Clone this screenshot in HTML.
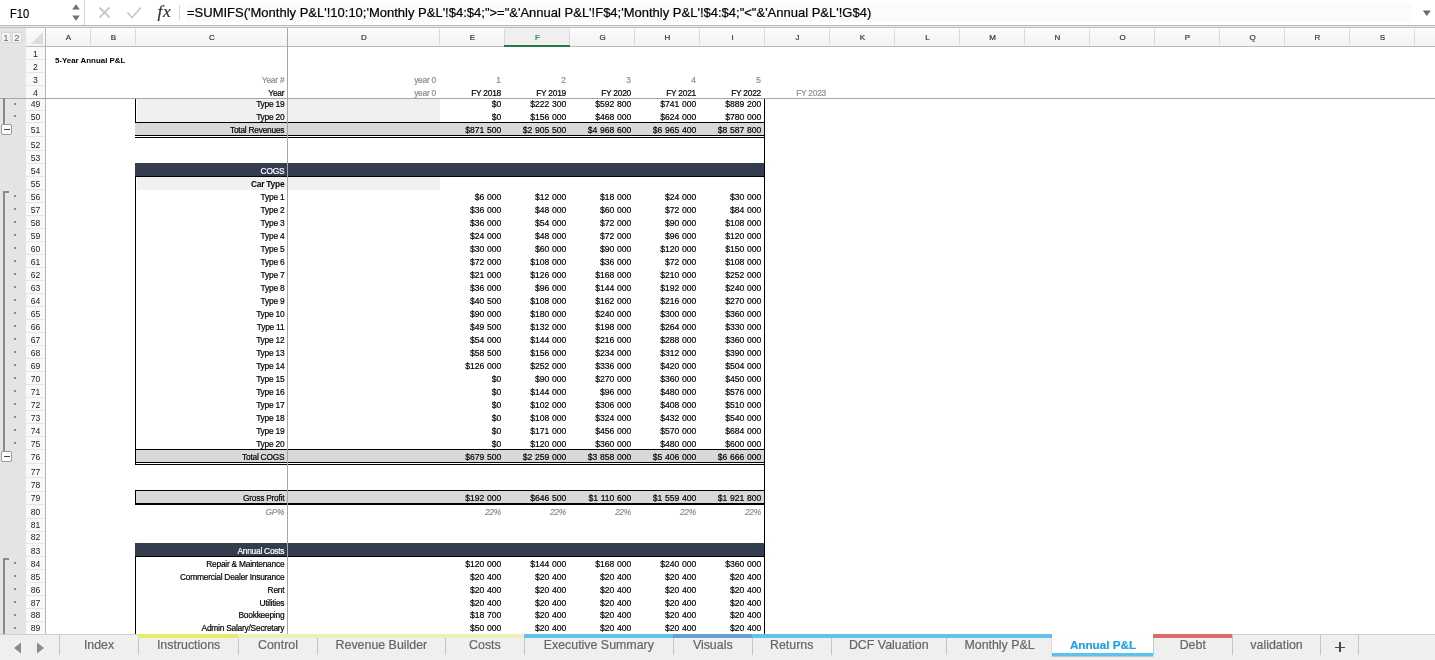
<!DOCTYPE html><html><head><meta charset="utf-8"><style>
html,body{margin:0;padding:0;}
body{width:1435px;height:660px;overflow:hidden;position:relative;background:#fff;font-family:"Liberation Sans",sans-serif;color:#000;}
div{position:absolute;}
.t{white-space:nowrap;}
#wrap{left:0;top:0;width:1435px;height:660px;will-change:transform;}
.n{word-spacing:0.3px;}
.t{-webkit-text-stroke:0.2px currentColor;}
.g{color:#8c8c8c;}
.L{letter-spacing:-0.24px;}
.hd{color:#222;font-weight:bold;}
</style></head><body><div id="wrap">
<div style="left:0px;top:0px;width:1435px;height:25px;background:#ffffff;"></div>
<div style="left:186px;top:3px;width:1226px;height:19px;background:#fbfbfb;"></div>
<div class="t " style="left:9.5px;top:7.00px;font-size:13px;line-height:13px;color:#000;transform:scaleX(0.86);transform-origin:0 0;">F10</div>
<svg style="position:absolute;left:71px;top:3px" width="10" height="20" viewBox="0 0 10 20"><path d="M1.2 6.5 L5 1.2 L8.8 6.5Z" fill="#707070"/><path d="M1.2 12.5 L5 17.8 L8.8 12.5Z" fill="#707070"/></svg>
<div style="left:84px;top:0px;width:1px;height:25px;background:#d4d4d4;"></div>
<svg style="position:absolute;left:97px;top:5px" width="16" height="16" viewBox="0 0 16 16"><path d="M2.5 2.5 L12.5 12.5 M12.5 2.5 L2.5 12.5" stroke="#c8c8c8" stroke-width="1.8" fill="none"/></svg>
<svg style="position:absolute;left:126px;top:5px" width="18" height="16" viewBox="0 0 18 16"><path d="M1.5 7.5 L6 12.5 L15 2.5" stroke="#c8c8c8" stroke-width="1.8" fill="none"/></svg>
<div class="t " style="left:157.5px;top:2.69px;font-size:17.5px;line-height:17.5px;color:#333;font-family:'Liberation Serif',serif;font-style:italic;letter-spacing:0.6px;">fx</div>
<div style="left:179px;top:5px;width:1px;height:15px;background:#d8d8d8;"></div>
<div class="t " style="left:187px;top:6.00px;font-size:13px;line-height:13px;color:#000;">=SUMIFS('Monthly P&amp;L'!10:10;'Monthly P&amp;L'!$4:$4;"&gt;="&amp;'Annual P&amp;L'!F$4;'Monthly P&amp;L'!$4:$4;"&lt;"&amp;'Annual P&amp;L'!G$4)</div>
<svg style="position:absolute;left:1421px;top:7px" width="12" height="10" viewBox="0 0 12 10"><path d="M1.8 3.5 L9.8 3.5 L5.8 9Z" fill="#6a6a6a"/></svg>
<div style="left:0px;top:25px;width:1435px;height:1px;background:#b9b9b9;"></div>
<div style="left:0px;top:26px;width:1435px;height:1px;background:#ececec;"></div>
<div style="left:0px;top:27px;width:1435px;height:1px;background:#bdbdbd;"></div>
<div style="left:0px;top:28px;width:26px;height:606px;background:#e4e4e4;"></div>
<div style="left:1px;top:32px;width:10px;height:11px;background:#f3f3f3;border:1px solid #d9d9d9;box-sizing:border-box;"></div>
<div class="t " style="left:1.0px;width:10px;text-align:center;top:33.46px;font-size:9.5px;line-height:9.5px;color:#666;-webkit-text-stroke:0;">1</div>
<div style="left:12px;top:32px;width:10px;height:11px;background:#f3f3f3;border:1px solid #d9d9d9;box-sizing:border-box;"></div>
<div class="t " style="left:12.0px;width:10px;text-align:center;top:33.46px;font-size:9.5px;line-height:9.5px;color:#666;-webkit-text-stroke:0;">2</div>
<div style="left:26px;top:28px;width:1409px;height:18px;background:linear-gradient(#fcfcfc,#f3f3f3);"></div>
<svg style="position:absolute;left:30px;top:31px" width="14" height="14" viewBox="0 0 14 14"><path d="M1 13 L13 1 L13 13Z" fill="#dcdcdc"/></svg>
<div style="left:505px;top:28px;width:65px;height:17px;background:#efefef;"></div>
<div style="left:90px;top:29px;width:1px;height:16px;background:#dadada;"></div>
<div style="left:135px;top:29px;width:1px;height:16px;background:#dadada;"></div>
<div style="left:439px;top:29px;width:1px;height:16px;background:#dadada;"></div>
<div style="left:504px;top:29px;width:1px;height:16px;background:#dadada;"></div>
<div style="left:569px;top:29px;width:1px;height:16px;background:#dadada;"></div>
<div style="left:634px;top:29px;width:1px;height:16px;background:#dadada;"></div>
<div style="left:699px;top:29px;width:1px;height:16px;background:#dadada;"></div>
<div style="left:764px;top:29px;width:1px;height:16px;background:#dadada;"></div>
<div style="left:829px;top:29px;width:1px;height:16px;background:#dadada;"></div>
<div style="left:894px;top:29px;width:1px;height:16px;background:#dadada;"></div>
<div style="left:959px;top:29px;width:1px;height:16px;background:#dadada;"></div>
<div style="left:1024px;top:29px;width:1px;height:16px;background:#dadada;"></div>
<div style="left:1089px;top:29px;width:1px;height:16px;background:#dadada;"></div>
<div style="left:1154px;top:29px;width:1px;height:16px;background:#dadada;"></div>
<div style="left:1219px;top:29px;width:1px;height:16px;background:#dadada;"></div>
<div style="left:1284px;top:29px;width:1px;height:16px;background:#dadada;"></div>
<div style="left:1349px;top:29px;width:1px;height:16px;background:#dadada;"></div>
<div style="left:1414px;top:29px;width:1px;height:16px;background:#dadada;"></div>
<div style="left:26px;top:46px;width:1409px;height:1px;background:#bcbcbc;"></div>
<div style="left:504px;top:45px;width:66px;height:2px;background:#1f7a44;"></div>
<div class="t " style="left:48.5px;width:40px;text-align:center;top:34.00px;font-size:8px;line-height:8px;color:#333;-webkit-text-stroke:0.2px currentColor;">A</div>
<div class="t " style="left:93.5px;width:40px;text-align:center;top:34.00px;font-size:8px;line-height:8px;color:#333;-webkit-text-stroke:0.2px currentColor;">B</div>
<div class="t " style="left:192.0px;width:40px;text-align:center;top:34.00px;font-size:8px;line-height:8px;color:#333;-webkit-text-stroke:0.2px currentColor;">C</div>
<div class="t " style="left:344.0px;width:40px;text-align:center;top:34.00px;font-size:8px;line-height:8px;color:#333;-webkit-text-stroke:0.2px currentColor;">D</div>
<div class="t " style="left:452.5px;width:40px;text-align:center;top:34.00px;font-size:8px;line-height:8px;color:#333;-webkit-text-stroke:0.2px currentColor;">E</div>
<div class="t " style="left:517.5px;width:40px;text-align:center;top:34.00px;font-size:8px;line-height:8px;color:#1f7a44;-webkit-text-stroke:0.2px currentColor;">F</div>
<div class="t " style="left:582.5px;width:40px;text-align:center;top:34.00px;font-size:8px;line-height:8px;color:#333;-webkit-text-stroke:0.2px currentColor;">G</div>
<div class="t " style="left:647.5px;width:40px;text-align:center;top:34.00px;font-size:8px;line-height:8px;color:#333;-webkit-text-stroke:0.2px currentColor;">H</div>
<div class="t " style="left:712.5px;width:40px;text-align:center;top:34.00px;font-size:8px;line-height:8px;color:#333;-webkit-text-stroke:0.2px currentColor;">I</div>
<div class="t " style="left:777.5px;width:40px;text-align:center;top:34.00px;font-size:8px;line-height:8px;color:#333;-webkit-text-stroke:0.2px currentColor;">J</div>
<div class="t " style="left:842.5px;width:40px;text-align:center;top:34.00px;font-size:8px;line-height:8px;color:#333;-webkit-text-stroke:0.2px currentColor;">K</div>
<div class="t " style="left:907.5px;width:40px;text-align:center;top:34.00px;font-size:8px;line-height:8px;color:#333;-webkit-text-stroke:0.2px currentColor;">L</div>
<div class="t " style="left:972.5px;width:40px;text-align:center;top:34.00px;font-size:8px;line-height:8px;color:#333;-webkit-text-stroke:0.2px currentColor;">M</div>
<div class="t " style="left:1037.5px;width:40px;text-align:center;top:34.00px;font-size:8px;line-height:8px;color:#333;-webkit-text-stroke:0.2px currentColor;">N</div>
<div class="t " style="left:1102.5px;width:40px;text-align:center;top:34.00px;font-size:8px;line-height:8px;color:#333;-webkit-text-stroke:0.2px currentColor;">O</div>
<div class="t " style="left:1167.5px;width:40px;text-align:center;top:34.00px;font-size:8px;line-height:8px;color:#333;-webkit-text-stroke:0.2px currentColor;">P</div>
<div class="t " style="left:1232.5px;width:40px;text-align:center;top:34.00px;font-size:8px;line-height:8px;color:#333;-webkit-text-stroke:0.2px currentColor;">Q</div>
<div class="t " style="left:1297.5px;width:40px;text-align:center;top:34.00px;font-size:8px;line-height:8px;color:#333;-webkit-text-stroke:0.2px currentColor;">R</div>
<div class="t " style="left:1362.5px;width:40px;text-align:center;top:34.00px;font-size:8px;line-height:8px;color:#333;-webkit-text-stroke:0.2px currentColor;">S</div>
<div style="left:26px;top:47px;width:19px;height:587px;background:#f9f9f9;"></div>
<div style="left:26px;top:59px;width:19px;height:1px;background:#e6e6e6;"></div>
<div class="t " style="left:26.0px;width:19px;text-align:center;top:50.00px;font-size:8.6px;line-height:8.6px;color:#222;-webkit-text-stroke:0;">1</div>
<div style="left:26px;top:72px;width:19px;height:1px;background:#e6e6e6;"></div>
<div class="t " style="left:26.0px;width:19px;text-align:center;top:63.00px;font-size:8.6px;line-height:8.6px;color:#222;-webkit-text-stroke:0;">2</div>
<div style="left:26px;top:85px;width:19px;height:1px;background:#e6e6e6;"></div>
<div class="t " style="left:26.0px;width:19px;text-align:center;top:76.00px;font-size:8.6px;line-height:8.6px;color:#222;-webkit-text-stroke:0;">3</div>
<div class="t " style="left:26.0px;width:19px;text-align:center;top:89.00px;font-size:8.6px;line-height:8.6px;color:#222;-webkit-text-stroke:0;">4</div>
<div style="left:26px;top:110px;width:19px;height:1px;background:#e6e6e6;"></div>
<div class="t " style="left:26.0px;width:19px;text-align:center;top:100.00px;font-size:8.6px;line-height:8.6px;color:#222;-webkit-text-stroke:0;">49</div>
<div style="left:26px;top:122px;width:19px;height:1px;background:#e6e6e6;"></div>
<div class="t " style="left:26.0px;width:19px;text-align:center;top:113.00px;font-size:8.6px;line-height:8.6px;color:#222;-webkit-text-stroke:0;">50</div>
<div style="left:26px;top:136px;width:19px;height:1px;background:#e6e6e6;"></div>
<div class="t " style="left:26.0px;width:19px;text-align:center;top:126.00px;font-size:8.6px;line-height:8.6px;color:#222;-webkit-text-stroke:0;">51</div>
<div style="left:26px;top:150px;width:19px;height:1px;background:#e6e6e6;"></div>
<div class="t " style="left:26.0px;width:19px;text-align:center;top:141.00px;font-size:8.6px;line-height:8.6px;color:#222;-webkit-text-stroke:0;">52</div>
<div style="left:26px;top:163px;width:19px;height:1px;background:#e6e6e6;"></div>
<div class="t " style="left:26.0px;width:19px;text-align:center;top:154.00px;font-size:8.6px;line-height:8.6px;color:#222;-webkit-text-stroke:0;">53</div>
<div style="left:26px;top:176px;width:19px;height:1px;background:#e6e6e6;"></div>
<div class="t " style="left:26.0px;width:19px;text-align:center;top:167.00px;font-size:8.6px;line-height:8.6px;color:#222;-webkit-text-stroke:0;">54</div>
<div style="left:26px;top:189px;width:19px;height:1px;background:#e6e6e6;"></div>
<div class="t " style="left:26.0px;width:19px;text-align:center;top:180.00px;font-size:8.6px;line-height:8.6px;color:#222;-webkit-text-stroke:0;">55</div>
<div style="left:26px;top:202px;width:19px;height:1px;background:#e6e6e6;"></div>
<div class="t " style="left:26.0px;width:19px;text-align:center;top:193.00px;font-size:8.6px;line-height:8.6px;color:#222;-webkit-text-stroke:0;">56</div>
<div style="left:26px;top:215px;width:19px;height:1px;background:#e6e6e6;"></div>
<div class="t " style="left:26.0px;width:19px;text-align:center;top:206.00px;font-size:8.6px;line-height:8.6px;color:#222;-webkit-text-stroke:0;">57</div>
<div style="left:26px;top:228px;width:19px;height:1px;background:#e6e6e6;"></div>
<div class="t " style="left:26.0px;width:19px;text-align:center;top:219.00px;font-size:8.6px;line-height:8.6px;color:#222;-webkit-text-stroke:0;">58</div>
<div style="left:26px;top:241px;width:19px;height:1px;background:#e6e6e6;"></div>
<div class="t " style="left:26.0px;width:19px;text-align:center;top:232.00px;font-size:8.6px;line-height:8.6px;color:#222;-webkit-text-stroke:0;">59</div>
<div style="left:26px;top:254px;width:19px;height:1px;background:#e6e6e6;"></div>
<div class="t " style="left:26.0px;width:19px;text-align:center;top:245.00px;font-size:8.6px;line-height:8.6px;color:#222;-webkit-text-stroke:0;">60</div>
<div style="left:26px;top:267px;width:19px;height:1px;background:#e6e6e6;"></div>
<div class="t " style="left:26.0px;width:19px;text-align:center;top:258.00px;font-size:8.6px;line-height:8.6px;color:#222;-webkit-text-stroke:0;">61</div>
<div style="left:26px;top:280px;width:19px;height:1px;background:#e6e6e6;"></div>
<div class="t " style="left:26.0px;width:19px;text-align:center;top:271.00px;font-size:8.6px;line-height:8.6px;color:#222;-webkit-text-stroke:0;">62</div>
<div style="left:26px;top:293px;width:19px;height:1px;background:#e6e6e6;"></div>
<div class="t " style="left:26.0px;width:19px;text-align:center;top:284.00px;font-size:8.6px;line-height:8.6px;color:#222;-webkit-text-stroke:0;">63</div>
<div style="left:26px;top:306px;width:19px;height:1px;background:#e6e6e6;"></div>
<div class="t " style="left:26.0px;width:19px;text-align:center;top:297.00px;font-size:8.6px;line-height:8.6px;color:#222;-webkit-text-stroke:0;">64</div>
<div style="left:26px;top:319px;width:19px;height:1px;background:#e6e6e6;"></div>
<div class="t " style="left:26.0px;width:19px;text-align:center;top:310.00px;font-size:8.6px;line-height:8.6px;color:#222;-webkit-text-stroke:0;">65</div>
<div style="left:26px;top:332px;width:19px;height:1px;background:#e6e6e6;"></div>
<div class="t " style="left:26.0px;width:19px;text-align:center;top:323.00px;font-size:8.6px;line-height:8.6px;color:#222;-webkit-text-stroke:0;">66</div>
<div style="left:26px;top:345px;width:19px;height:1px;background:#e6e6e6;"></div>
<div class="t " style="left:26.0px;width:19px;text-align:center;top:336.00px;font-size:8.6px;line-height:8.6px;color:#222;-webkit-text-stroke:0;">67</div>
<div style="left:26px;top:358px;width:19px;height:1px;background:#e6e6e6;"></div>
<div class="t " style="left:26.0px;width:19px;text-align:center;top:349.00px;font-size:8.6px;line-height:8.6px;color:#222;-webkit-text-stroke:0;">68</div>
<div style="left:26px;top:371px;width:19px;height:1px;background:#e6e6e6;"></div>
<div class="t " style="left:26.0px;width:19px;text-align:center;top:362.00px;font-size:8.6px;line-height:8.6px;color:#222;-webkit-text-stroke:0;">69</div>
<div style="left:26px;top:384px;width:19px;height:1px;background:#e6e6e6;"></div>
<div class="t " style="left:26.0px;width:19px;text-align:center;top:375.00px;font-size:8.6px;line-height:8.6px;color:#222;-webkit-text-stroke:0;">70</div>
<div style="left:26px;top:397px;width:19px;height:1px;background:#e6e6e6;"></div>
<div class="t " style="left:26.0px;width:19px;text-align:center;top:388.00px;font-size:8.6px;line-height:8.6px;color:#222;-webkit-text-stroke:0;">71</div>
<div style="left:26px;top:410px;width:19px;height:1px;background:#e6e6e6;"></div>
<div class="t " style="left:26.0px;width:19px;text-align:center;top:401.00px;font-size:8.6px;line-height:8.6px;color:#222;-webkit-text-stroke:0;">72</div>
<div style="left:26px;top:423px;width:19px;height:1px;background:#e6e6e6;"></div>
<div class="t " style="left:26.0px;width:19px;text-align:center;top:414.00px;font-size:8.6px;line-height:8.6px;color:#222;-webkit-text-stroke:0;">73</div>
<div style="left:26px;top:436px;width:19px;height:1px;background:#e6e6e6;"></div>
<div class="t " style="left:26.0px;width:19px;text-align:center;top:427.00px;font-size:8.6px;line-height:8.6px;color:#222;-webkit-text-stroke:0;">74</div>
<div style="left:26px;top:449px;width:19px;height:1px;background:#e6e6e6;"></div>
<div class="t " style="left:26.0px;width:19px;text-align:center;top:440.00px;font-size:8.6px;line-height:8.6px;color:#222;-webkit-text-stroke:0;">75</div>
<div style="left:26px;top:463px;width:19px;height:1px;background:#e6e6e6;"></div>
<div class="t " style="left:26.0px;width:19px;text-align:center;top:453.00px;font-size:8.6px;line-height:8.6px;color:#222;-webkit-text-stroke:0;">76</div>
<div style="left:26px;top:477px;width:19px;height:1px;background:#e6e6e6;"></div>
<div class="t " style="left:26.0px;width:19px;text-align:center;top:468.00px;font-size:8.6px;line-height:8.6px;color:#222;-webkit-text-stroke:0;">77</div>
<div style="left:26px;top:491px;width:19px;height:1px;background:#e6e6e6;"></div>
<div class="t " style="left:26.0px;width:19px;text-align:center;top:481.00px;font-size:8.6px;line-height:8.6px;color:#222;-webkit-text-stroke:0;">78</div>
<div style="left:26px;top:504px;width:19px;height:1px;background:#e6e6e6;"></div>
<div class="t " style="left:26.0px;width:19px;text-align:center;top:494.00px;font-size:8.6px;line-height:8.6px;color:#222;-webkit-text-stroke:0;">79</div>
<div style="left:26px;top:518px;width:19px;height:1px;background:#e6e6e6;"></div>
<div class="t " style="left:26.0px;width:19px;text-align:center;top:508.00px;font-size:8.6px;line-height:8.6px;color:#222;-webkit-text-stroke:0;">80</div>
<div style="left:26px;top:531px;width:19px;height:1px;background:#e6e6e6;"></div>
<div class="t " style="left:26.0px;width:19px;text-align:center;top:521.00px;font-size:8.6px;line-height:8.6px;color:#222;-webkit-text-stroke:0;">81</div>
<div style="left:26px;top:543px;width:19px;height:1px;background:#e6e6e6;"></div>
<div class="t " style="left:26.0px;width:19px;text-align:center;top:533.00px;font-size:8.6px;line-height:8.6px;color:#222;-webkit-text-stroke:0;">82</div>
<div style="left:26px;top:556px;width:19px;height:1px;background:#e6e6e6;"></div>
<div class="t " style="left:26.0px;width:19px;text-align:center;top:547.00px;font-size:8.6px;line-height:8.6px;color:#222;-webkit-text-stroke:0;">83</div>
<div style="left:26px;top:569px;width:19px;height:1px;background:#e6e6e6;"></div>
<div class="t " style="left:26.0px;width:19px;text-align:center;top:560.00px;font-size:8.6px;line-height:8.6px;color:#222;-webkit-text-stroke:0;">84</div>
<div style="left:26px;top:582px;width:19px;height:1px;background:#e6e6e6;"></div>
<div class="t " style="left:26.0px;width:19px;text-align:center;top:573.00px;font-size:8.6px;line-height:8.6px;color:#222;-webkit-text-stroke:0;">85</div>
<div style="left:26px;top:595px;width:19px;height:1px;background:#e6e6e6;"></div>
<div class="t " style="left:26.0px;width:19px;text-align:center;top:586.00px;font-size:8.6px;line-height:8.6px;color:#222;-webkit-text-stroke:0;">86</div>
<div style="left:26px;top:608px;width:19px;height:1px;background:#e6e6e6;"></div>
<div class="t " style="left:26.0px;width:19px;text-align:center;top:599.00px;font-size:8.6px;line-height:8.6px;color:#222;-webkit-text-stroke:0;">87</div>
<div style="left:26px;top:621px;width:19px;height:1px;background:#e6e6e6;"></div>
<div class="t " style="left:26.0px;width:19px;text-align:center;top:611.00px;font-size:8.6px;line-height:8.6px;color:#222;-webkit-text-stroke:0;">88</div>
<div class="t " style="left:26.0px;width:19px;text-align:center;top:624.00px;font-size:8.6px;line-height:8.6px;color:#222;-webkit-text-stroke:0;">89</div>
<div style="left:45px;top:28px;width:1px;height:606px;background:#b8b8b8;"></div>
<div class="t " style="left:55px;top:57.00px;font-size:7.9px;line-height:7.9px;font-weight:bold;-webkit-text-stroke:0;">5-Year Annual P&amp;L</div>
<div class="t g L" style="right:1150.7px;top:76.00px;font-size:8.4px;line-height:8.4px;">Year #</div>
<div class="t g L" style="right:999px;top:76.00px;font-size:8.4px;line-height:8.4px;">year 0</div>
<div class="t g" style="right:934px;top:76.00px;font-size:8.4px;line-height:8.4px;">1</div>
<div class="t g" style="right:869px;top:76.00px;font-size:8.4px;line-height:8.4px;">2</div>
<div class="t g" style="right:804px;top:76.00px;font-size:8.4px;line-height:8.4px;">3</div>
<div class="t g" style="right:739px;top:76.00px;font-size:8.4px;line-height:8.4px;">4</div>
<div class="t g" style="right:674px;top:76.00px;font-size:8.4px;line-height:8.4px;">5</div>
<div class="t L" style="right:1150.7px;top:89.00px;font-size:8.4px;line-height:8.4px;">Year</div>
<div class="t g L" style="right:999px;top:89.00px;font-size:8.4px;line-height:8.4px;">year 0</div>
<div class="t L" style="right:934px;top:89.00px;font-size:8.4px;line-height:8.4px;">FY 2018</div>
<div class="t L" style="right:869px;top:89.00px;font-size:8.4px;line-height:8.4px;">FY 2019</div>
<div class="t L" style="right:804px;top:89.00px;font-size:8.4px;line-height:8.4px;">FY 2020</div>
<div class="t L" style="right:739px;top:89.00px;font-size:8.4px;line-height:8.4px;">FY 2021</div>
<div class="t L" style="right:674px;top:89.00px;font-size:8.4px;line-height:8.4px;">FY 2022</div>
<div class="t g L" style="right:609px;top:89.00px;font-size:8.4px;line-height:8.4px;">FY 2023</div>
<div style="left:137px;top:99px;width:303px;height:23px;background:#f0f0f0;"></div>
<div style="left:135px;top:123px;width:629px;height:12px;background:#d9d9d9;"></div>
<div style="left:135px;top:122px;width:630px;height:1px;background:#000;"></div>
<div style="left:135px;top:135px;width:630px;height:1px;background:#000;"></div>
<div style="left:135px;top:137px;width:630px;height:1px;background:#000;"></div>
<div style="left:135px;top:98px;width:1px;height:25px;background:#000;"></div>
<div style="left:135px;top:163px;width:629px;height:13px;background:#333d4e;"></div>
<div style="left:135px;top:176px;width:630px;height:1px;background:#000;"></div>
<div style="left:137px;top:177px;width:303px;height:13px;background:#f0f0f0;"></div>
<div style="left:136px;top:450px;width:628px;height:12px;background:#d9d9d9;"></div>
<div style="left:135px;top:449px;width:630px;height:1px;background:#000;"></div>
<div style="left:135px;top:462px;width:630px;height:1px;background:#000;"></div>
<div style="left:135px;top:464px;width:630px;height:1px;background:#000;"></div>
<div style="left:135px;top:176px;width:1px;height:289px;background:#000;"></div>
<div style="left:136px;top:491px;width:628px;height:12px;background:#d9d9d9;"></div>
<div style="left:135px;top:490px;width:630px;height:1px;background:#000;"></div>
<div style="left:135px;top:503px;width:630px;height:2px;background:#000;"></div>
<div style="left:135px;top:490px;width:1px;height:15px;background:#000;"></div>
<div style="left:135px;top:543px;width:629px;height:13px;background:#333d4e;"></div>
<div style="left:135px;top:556px;width:630px;height:1px;background:#000;"></div>
<div style="left:135px;top:556px;width:1px;height:78px;background:#000;"></div>
<div style="left:764px;top:98px;width:1px;height:536px;background:#000;"></div>
<div class="t L" style="right:1150.7px;top:100.00px;font-size:8.4px;line-height:8.4px;">Type 19</div>
<div class="t n" style="right:933.6px;top:100.00px;font-size:8.6px;line-height:8.6px;">$0</div>
<div class="t n" style="right:868.6px;top:100.00px;font-size:8.6px;line-height:8.6px;">$222 300</div>
<div class="t n" style="right:803.6px;top:100.00px;font-size:8.6px;line-height:8.6px;">$592 800</div>
<div class="t n" style="right:738.6px;top:100.00px;font-size:8.6px;line-height:8.6px;">$741 000</div>
<div class="t n" style="right:673.6px;top:100.00px;font-size:8.6px;line-height:8.6px;">$889 200</div>
<div class="t L" style="right:1150.7px;top:113.00px;font-size:8.4px;line-height:8.4px;">Type 20</div>
<div class="t n" style="right:933.6px;top:113.00px;font-size:8.6px;line-height:8.6px;">$0</div>
<div class="t n" style="right:868.6px;top:113.00px;font-size:8.6px;line-height:8.6px;">$156 000</div>
<div class="t n" style="right:803.6px;top:113.00px;font-size:8.6px;line-height:8.6px;">$468 000</div>
<div class="t n" style="right:738.6px;top:113.00px;font-size:8.6px;line-height:8.6px;">$624 000</div>
<div class="t n" style="right:673.6px;top:113.00px;font-size:8.6px;line-height:8.6px;">$780 000</div>
<div class="t L" style="right:1150.7px;top:126.00px;font-size:8.4px;line-height:8.4px;">Total Revenues</div>
<div class="t n" style="right:933.6px;top:126.00px;font-size:8.6px;line-height:8.6px;">$871 500</div>
<div class="t n" style="right:868.6px;top:126.00px;font-size:8.6px;line-height:8.6px;">$2 905 500</div>
<div class="t n" style="right:803.6px;top:126.00px;font-size:8.6px;line-height:8.6px;">$4 968 600</div>
<div class="t n" style="right:738.6px;top:126.00px;font-size:8.6px;line-height:8.6px;">$6 965 400</div>
<div class="t n" style="right:673.6px;top:126.00px;font-size:8.6px;line-height:8.6px;">$8 587 800</div>
<div class="t L" style="right:1150.7px;top:193.00px;font-size:8.4px;line-height:8.4px;">Type 1</div>
<div class="t n" style="right:933.6px;top:193.00px;font-size:8.6px;line-height:8.6px;">$6 000</div>
<div class="t n" style="right:868.6px;top:193.00px;font-size:8.6px;line-height:8.6px;">$12 000</div>
<div class="t n" style="right:803.6px;top:193.00px;font-size:8.6px;line-height:8.6px;">$18 000</div>
<div class="t n" style="right:738.6px;top:193.00px;font-size:8.6px;line-height:8.6px;">$24 000</div>
<div class="t n" style="right:673.6px;top:193.00px;font-size:8.6px;line-height:8.6px;">$30 000</div>
<div class="t L" style="right:1150.7px;top:206.00px;font-size:8.4px;line-height:8.4px;">Type 2</div>
<div class="t n" style="right:933.6px;top:206.00px;font-size:8.6px;line-height:8.6px;">$36 000</div>
<div class="t n" style="right:868.6px;top:206.00px;font-size:8.6px;line-height:8.6px;">$48 000</div>
<div class="t n" style="right:803.6px;top:206.00px;font-size:8.6px;line-height:8.6px;">$60 000</div>
<div class="t n" style="right:738.6px;top:206.00px;font-size:8.6px;line-height:8.6px;">$72 000</div>
<div class="t n" style="right:673.6px;top:206.00px;font-size:8.6px;line-height:8.6px;">$84 000</div>
<div class="t L" style="right:1150.7px;top:219.00px;font-size:8.4px;line-height:8.4px;">Type 3</div>
<div class="t n" style="right:933.6px;top:219.00px;font-size:8.6px;line-height:8.6px;">$36 000</div>
<div class="t n" style="right:868.6px;top:219.00px;font-size:8.6px;line-height:8.6px;">$54 000</div>
<div class="t n" style="right:803.6px;top:219.00px;font-size:8.6px;line-height:8.6px;">$72 000</div>
<div class="t n" style="right:738.6px;top:219.00px;font-size:8.6px;line-height:8.6px;">$90 000</div>
<div class="t n" style="right:673.6px;top:219.00px;font-size:8.6px;line-height:8.6px;">$108 000</div>
<div class="t L" style="right:1150.7px;top:232.00px;font-size:8.4px;line-height:8.4px;">Type 4</div>
<div class="t n" style="right:933.6px;top:232.00px;font-size:8.6px;line-height:8.6px;">$24 000</div>
<div class="t n" style="right:868.6px;top:232.00px;font-size:8.6px;line-height:8.6px;">$48 000</div>
<div class="t n" style="right:803.6px;top:232.00px;font-size:8.6px;line-height:8.6px;">$72 000</div>
<div class="t n" style="right:738.6px;top:232.00px;font-size:8.6px;line-height:8.6px;">$96 000</div>
<div class="t n" style="right:673.6px;top:232.00px;font-size:8.6px;line-height:8.6px;">$120 000</div>
<div class="t L" style="right:1150.7px;top:245.00px;font-size:8.4px;line-height:8.4px;">Type 5</div>
<div class="t n" style="right:933.6px;top:245.00px;font-size:8.6px;line-height:8.6px;">$30 000</div>
<div class="t n" style="right:868.6px;top:245.00px;font-size:8.6px;line-height:8.6px;">$60 000</div>
<div class="t n" style="right:803.6px;top:245.00px;font-size:8.6px;line-height:8.6px;">$90 000</div>
<div class="t n" style="right:738.6px;top:245.00px;font-size:8.6px;line-height:8.6px;">$120 000</div>
<div class="t n" style="right:673.6px;top:245.00px;font-size:8.6px;line-height:8.6px;">$150 000</div>
<div class="t L" style="right:1150.7px;top:258.00px;font-size:8.4px;line-height:8.4px;">Type 6</div>
<div class="t n" style="right:933.6px;top:258.00px;font-size:8.6px;line-height:8.6px;">$72 000</div>
<div class="t n" style="right:868.6px;top:258.00px;font-size:8.6px;line-height:8.6px;">$108 000</div>
<div class="t n" style="right:803.6px;top:258.00px;font-size:8.6px;line-height:8.6px;">$36 000</div>
<div class="t n" style="right:738.6px;top:258.00px;font-size:8.6px;line-height:8.6px;">$72 000</div>
<div class="t n" style="right:673.6px;top:258.00px;font-size:8.6px;line-height:8.6px;">$108 000</div>
<div class="t L" style="right:1150.7px;top:271.00px;font-size:8.4px;line-height:8.4px;">Type 7</div>
<div class="t n" style="right:933.6px;top:271.00px;font-size:8.6px;line-height:8.6px;">$21 000</div>
<div class="t n" style="right:868.6px;top:271.00px;font-size:8.6px;line-height:8.6px;">$126 000</div>
<div class="t n" style="right:803.6px;top:271.00px;font-size:8.6px;line-height:8.6px;">$168 000</div>
<div class="t n" style="right:738.6px;top:271.00px;font-size:8.6px;line-height:8.6px;">$210 000</div>
<div class="t n" style="right:673.6px;top:271.00px;font-size:8.6px;line-height:8.6px;">$252 000</div>
<div class="t L" style="right:1150.7px;top:284.00px;font-size:8.4px;line-height:8.4px;">Type 8</div>
<div class="t n" style="right:933.6px;top:284.00px;font-size:8.6px;line-height:8.6px;">$36 000</div>
<div class="t n" style="right:868.6px;top:284.00px;font-size:8.6px;line-height:8.6px;">$96 000</div>
<div class="t n" style="right:803.6px;top:284.00px;font-size:8.6px;line-height:8.6px;">$144 000</div>
<div class="t n" style="right:738.6px;top:284.00px;font-size:8.6px;line-height:8.6px;">$192 000</div>
<div class="t n" style="right:673.6px;top:284.00px;font-size:8.6px;line-height:8.6px;">$240 000</div>
<div class="t L" style="right:1150.7px;top:297.00px;font-size:8.4px;line-height:8.4px;">Type 9</div>
<div class="t n" style="right:933.6px;top:297.00px;font-size:8.6px;line-height:8.6px;">$40 500</div>
<div class="t n" style="right:868.6px;top:297.00px;font-size:8.6px;line-height:8.6px;">$108 000</div>
<div class="t n" style="right:803.6px;top:297.00px;font-size:8.6px;line-height:8.6px;">$162 000</div>
<div class="t n" style="right:738.6px;top:297.00px;font-size:8.6px;line-height:8.6px;">$216 000</div>
<div class="t n" style="right:673.6px;top:297.00px;font-size:8.6px;line-height:8.6px;">$270 000</div>
<div class="t L" style="right:1150.7px;top:310.00px;font-size:8.4px;line-height:8.4px;">Type 10</div>
<div class="t n" style="right:933.6px;top:310.00px;font-size:8.6px;line-height:8.6px;">$90 000</div>
<div class="t n" style="right:868.6px;top:310.00px;font-size:8.6px;line-height:8.6px;">$180 000</div>
<div class="t n" style="right:803.6px;top:310.00px;font-size:8.6px;line-height:8.6px;">$240 000</div>
<div class="t n" style="right:738.6px;top:310.00px;font-size:8.6px;line-height:8.6px;">$300 000</div>
<div class="t n" style="right:673.6px;top:310.00px;font-size:8.6px;line-height:8.6px;">$360 000</div>
<div class="t L" style="right:1150.7px;top:323.00px;font-size:8.4px;line-height:8.4px;">Type 11</div>
<div class="t n" style="right:933.6px;top:323.00px;font-size:8.6px;line-height:8.6px;">$49 500</div>
<div class="t n" style="right:868.6px;top:323.00px;font-size:8.6px;line-height:8.6px;">$132 000</div>
<div class="t n" style="right:803.6px;top:323.00px;font-size:8.6px;line-height:8.6px;">$198 000</div>
<div class="t n" style="right:738.6px;top:323.00px;font-size:8.6px;line-height:8.6px;">$264 000</div>
<div class="t n" style="right:673.6px;top:323.00px;font-size:8.6px;line-height:8.6px;">$330 000</div>
<div class="t L" style="right:1150.7px;top:336.00px;font-size:8.4px;line-height:8.4px;">Type 12</div>
<div class="t n" style="right:933.6px;top:336.00px;font-size:8.6px;line-height:8.6px;">$54 000</div>
<div class="t n" style="right:868.6px;top:336.00px;font-size:8.6px;line-height:8.6px;">$144 000</div>
<div class="t n" style="right:803.6px;top:336.00px;font-size:8.6px;line-height:8.6px;">$216 000</div>
<div class="t n" style="right:738.6px;top:336.00px;font-size:8.6px;line-height:8.6px;">$288 000</div>
<div class="t n" style="right:673.6px;top:336.00px;font-size:8.6px;line-height:8.6px;">$360 000</div>
<div class="t L" style="right:1150.7px;top:349.00px;font-size:8.4px;line-height:8.4px;">Type 13</div>
<div class="t n" style="right:933.6px;top:349.00px;font-size:8.6px;line-height:8.6px;">$58 500</div>
<div class="t n" style="right:868.6px;top:349.00px;font-size:8.6px;line-height:8.6px;">$156 000</div>
<div class="t n" style="right:803.6px;top:349.00px;font-size:8.6px;line-height:8.6px;">$234 000</div>
<div class="t n" style="right:738.6px;top:349.00px;font-size:8.6px;line-height:8.6px;">$312 000</div>
<div class="t n" style="right:673.6px;top:349.00px;font-size:8.6px;line-height:8.6px;">$390 000</div>
<div class="t L" style="right:1150.7px;top:362.00px;font-size:8.4px;line-height:8.4px;">Type 14</div>
<div class="t n" style="right:933.6px;top:362.00px;font-size:8.6px;line-height:8.6px;">$126 000</div>
<div class="t n" style="right:868.6px;top:362.00px;font-size:8.6px;line-height:8.6px;">$252 000</div>
<div class="t n" style="right:803.6px;top:362.00px;font-size:8.6px;line-height:8.6px;">$336 000</div>
<div class="t n" style="right:738.6px;top:362.00px;font-size:8.6px;line-height:8.6px;">$420 000</div>
<div class="t n" style="right:673.6px;top:362.00px;font-size:8.6px;line-height:8.6px;">$504 000</div>
<div class="t L" style="right:1150.7px;top:375.00px;font-size:8.4px;line-height:8.4px;">Type 15</div>
<div class="t n" style="right:933.6px;top:375.00px;font-size:8.6px;line-height:8.6px;">$0</div>
<div class="t n" style="right:868.6px;top:375.00px;font-size:8.6px;line-height:8.6px;">$90 000</div>
<div class="t n" style="right:803.6px;top:375.00px;font-size:8.6px;line-height:8.6px;">$270 000</div>
<div class="t n" style="right:738.6px;top:375.00px;font-size:8.6px;line-height:8.6px;">$360 000</div>
<div class="t n" style="right:673.6px;top:375.00px;font-size:8.6px;line-height:8.6px;">$450 000</div>
<div class="t L" style="right:1150.7px;top:388.00px;font-size:8.4px;line-height:8.4px;">Type 16</div>
<div class="t n" style="right:933.6px;top:388.00px;font-size:8.6px;line-height:8.6px;">$0</div>
<div class="t n" style="right:868.6px;top:388.00px;font-size:8.6px;line-height:8.6px;">$144 000</div>
<div class="t n" style="right:803.6px;top:388.00px;font-size:8.6px;line-height:8.6px;">$96 000</div>
<div class="t n" style="right:738.6px;top:388.00px;font-size:8.6px;line-height:8.6px;">$480 000</div>
<div class="t n" style="right:673.6px;top:388.00px;font-size:8.6px;line-height:8.6px;">$576 000</div>
<div class="t L" style="right:1150.7px;top:401.00px;font-size:8.4px;line-height:8.4px;">Type 17</div>
<div class="t n" style="right:933.6px;top:401.00px;font-size:8.6px;line-height:8.6px;">$0</div>
<div class="t n" style="right:868.6px;top:401.00px;font-size:8.6px;line-height:8.6px;">$102 000</div>
<div class="t n" style="right:803.6px;top:401.00px;font-size:8.6px;line-height:8.6px;">$306 000</div>
<div class="t n" style="right:738.6px;top:401.00px;font-size:8.6px;line-height:8.6px;">$408 000</div>
<div class="t n" style="right:673.6px;top:401.00px;font-size:8.6px;line-height:8.6px;">$510 000</div>
<div class="t L" style="right:1150.7px;top:414.00px;font-size:8.4px;line-height:8.4px;">Type 18</div>
<div class="t n" style="right:933.6px;top:414.00px;font-size:8.6px;line-height:8.6px;">$0</div>
<div class="t n" style="right:868.6px;top:414.00px;font-size:8.6px;line-height:8.6px;">$108 000</div>
<div class="t n" style="right:803.6px;top:414.00px;font-size:8.6px;line-height:8.6px;">$324 000</div>
<div class="t n" style="right:738.6px;top:414.00px;font-size:8.6px;line-height:8.6px;">$432 000</div>
<div class="t n" style="right:673.6px;top:414.00px;font-size:8.6px;line-height:8.6px;">$540 000</div>
<div class="t L" style="right:1150.7px;top:427.00px;font-size:8.4px;line-height:8.4px;">Type 19</div>
<div class="t n" style="right:933.6px;top:427.00px;font-size:8.6px;line-height:8.6px;">$0</div>
<div class="t n" style="right:868.6px;top:427.00px;font-size:8.6px;line-height:8.6px;">$171 000</div>
<div class="t n" style="right:803.6px;top:427.00px;font-size:8.6px;line-height:8.6px;">$456 000</div>
<div class="t n" style="right:738.6px;top:427.00px;font-size:8.6px;line-height:8.6px;">$570 000</div>
<div class="t n" style="right:673.6px;top:427.00px;font-size:8.6px;line-height:8.6px;">$684 000</div>
<div class="t L" style="right:1150.7px;top:440.00px;font-size:8.4px;line-height:8.4px;">Type 20</div>
<div class="t n" style="right:933.6px;top:440.00px;font-size:8.6px;line-height:8.6px;">$0</div>
<div class="t n" style="right:868.6px;top:440.00px;font-size:8.6px;line-height:8.6px;">$120 000</div>
<div class="t n" style="right:803.6px;top:440.00px;font-size:8.6px;line-height:8.6px;">$360 000</div>
<div class="t n" style="right:738.6px;top:440.00px;font-size:8.6px;line-height:8.6px;">$480 000</div>
<div class="t n" style="right:673.6px;top:440.00px;font-size:8.6px;line-height:8.6px;">$600 000</div>
<div class="t L" style="right:1150.7px;top:453.00px;font-size:8.4px;line-height:8.4px;">Total COGS</div>
<div class="t n" style="right:933.6px;top:453.00px;font-size:8.6px;line-height:8.6px;">$679 500</div>
<div class="t n" style="right:868.6px;top:453.00px;font-size:8.6px;line-height:8.6px;">$2 259 000</div>
<div class="t n" style="right:803.6px;top:453.00px;font-size:8.6px;line-height:8.6px;">$3 858 000</div>
<div class="t n" style="right:738.6px;top:453.00px;font-size:8.6px;line-height:8.6px;">$5 406 000</div>
<div class="t n" style="right:673.6px;top:453.00px;font-size:8.6px;line-height:8.6px;">$6 666 000</div>
<div class="t L" style="right:1150.7px;top:494.00px;font-size:8.4px;line-height:8.4px;">Gross Profit</div>
<div class="t n" style="right:933.6px;top:494.00px;font-size:8.6px;line-height:8.6px;">$192 000</div>
<div class="t n" style="right:868.6px;top:494.00px;font-size:8.6px;line-height:8.6px;">$646 500</div>
<div class="t n" style="right:803.6px;top:494.00px;font-size:8.6px;line-height:8.6px;">$1 110 600</div>
<div class="t n" style="right:738.6px;top:494.00px;font-size:8.6px;line-height:8.6px;">$1 559 400</div>
<div class="t n" style="right:673.6px;top:494.00px;font-size:8.6px;line-height:8.6px;">$1 921 800</div>
<div class="t L" style="right:1150.7px;top:560.00px;font-size:8.4px;line-height:8.4px;">Repair &amp; Maintenance</div>
<div class="t n" style="right:933.6px;top:560.00px;font-size:8.6px;line-height:8.6px;">$120 000</div>
<div class="t n" style="right:868.6px;top:560.00px;font-size:8.6px;line-height:8.6px;">$144 000</div>
<div class="t n" style="right:803.6px;top:560.00px;font-size:8.6px;line-height:8.6px;">$168 000</div>
<div class="t n" style="right:738.6px;top:560.00px;font-size:8.6px;line-height:8.6px;">$240 000</div>
<div class="t n" style="right:673.6px;top:560.00px;font-size:8.6px;line-height:8.6px;">$360 000</div>
<div class="t L" style="right:1150.7px;top:573.00px;font-size:8.4px;line-height:8.4px;">Commercial Dealer Insurance</div>
<div class="t n" style="right:933.6px;top:573.00px;font-size:8.6px;line-height:8.6px;">$20 400</div>
<div class="t n" style="right:868.6px;top:573.00px;font-size:8.6px;line-height:8.6px;">$20 400</div>
<div class="t n" style="right:803.6px;top:573.00px;font-size:8.6px;line-height:8.6px;">$20 400</div>
<div class="t n" style="right:738.6px;top:573.00px;font-size:8.6px;line-height:8.6px;">$20 400</div>
<div class="t n" style="right:673.6px;top:573.00px;font-size:8.6px;line-height:8.6px;">$20 400</div>
<div class="t L" style="right:1150.7px;top:586.00px;font-size:8.4px;line-height:8.4px;">Rent</div>
<div class="t n" style="right:933.6px;top:586.00px;font-size:8.6px;line-height:8.6px;">$20 400</div>
<div class="t n" style="right:868.6px;top:586.00px;font-size:8.6px;line-height:8.6px;">$20 400</div>
<div class="t n" style="right:803.6px;top:586.00px;font-size:8.6px;line-height:8.6px;">$20 400</div>
<div class="t n" style="right:738.6px;top:586.00px;font-size:8.6px;line-height:8.6px;">$20 400</div>
<div class="t n" style="right:673.6px;top:586.00px;font-size:8.6px;line-height:8.6px;">$20 400</div>
<div class="t L" style="right:1150.7px;top:599.00px;font-size:8.4px;line-height:8.4px;">Utilities</div>
<div class="t n" style="right:933.6px;top:599.00px;font-size:8.6px;line-height:8.6px;">$20 400</div>
<div class="t n" style="right:868.6px;top:599.00px;font-size:8.6px;line-height:8.6px;">$20 400</div>
<div class="t n" style="right:803.6px;top:599.00px;font-size:8.6px;line-height:8.6px;">$20 400</div>
<div class="t n" style="right:738.6px;top:599.00px;font-size:8.6px;line-height:8.6px;">$20 400</div>
<div class="t n" style="right:673.6px;top:599.00px;font-size:8.6px;line-height:8.6px;">$20 400</div>
<div class="t L" style="right:1150.7px;top:611.00px;font-size:8.4px;line-height:8.4px;">Bookkeeping</div>
<div class="t n" style="right:933.6px;top:611.00px;font-size:8.6px;line-height:8.6px;">$18 700</div>
<div class="t n" style="right:868.6px;top:611.00px;font-size:8.6px;line-height:8.6px;">$20 400</div>
<div class="t n" style="right:803.6px;top:611.00px;font-size:8.6px;line-height:8.6px;">$20 400</div>
<div class="t n" style="right:738.6px;top:611.00px;font-size:8.6px;line-height:8.6px;">$20 400</div>
<div class="t n" style="right:673.6px;top:611.00px;font-size:8.6px;line-height:8.6px;">$20 400</div>
<div class="t L" style="right:1150.7px;top:624.00px;font-size:8.4px;line-height:8.4px;">Admin Salary/Secretary</div>
<div class="t n" style="right:933.6px;top:624.00px;font-size:8.6px;line-height:8.6px;">$50 000</div>
<div class="t n" style="right:868.6px;top:624.00px;font-size:8.6px;line-height:8.6px;">$20 400</div>
<div class="t n" style="right:803.6px;top:624.00px;font-size:8.6px;line-height:8.6px;">$20 400</div>
<div class="t n" style="right:738.6px;top:624.00px;font-size:8.6px;line-height:8.6px;">$20 400</div>
<div class="t n" style="right:673.6px;top:624.00px;font-size:8.6px;line-height:8.6px;">$20 400</div>
<div class="t L" style="right:1150.7px;top:167.00px;font-size:8.4px;line-height:8.4px;color:#fff;">COGS</div>
<div class="t L" style="right:1150.7px;top:180.00px;font-size:8.4px;line-height:8.4px;font-weight:bold;-webkit-text-stroke:0;">Car Type</div>
<div class="t L" style="right:1150.7px;top:547.00px;font-size:8.4px;line-height:8.4px;color:#fff;">Annual Costs</div>
<div class="t g L" style="right:1150.7px;top:508.00px;font-size:8.4px;line-height:8.4px;font-style:italic;">GP%</div>
<div class="t g L" style="right:934px;top:508.00px;font-size:8.4px;line-height:8.4px;font-style:italic;">22%</div>
<div class="t g L" style="right:869px;top:508.00px;font-size:8.4px;line-height:8.4px;font-style:italic;">22%</div>
<div class="t g L" style="right:804px;top:508.00px;font-size:8.4px;line-height:8.4px;font-style:italic;">22%</div>
<div class="t g L" style="right:739px;top:508.00px;font-size:8.4px;line-height:8.4px;font-style:italic;">22%</div>
<div class="t g L" style="right:674px;top:508.00px;font-size:8.4px;line-height:8.4px;font-style:italic;">22%</div>
<div style="left:287px;top:28px;width:1px;height:606px;background:#a6a6a6;"></div>
<div style="left:0px;top:98px;width:1435px;height:1px;background:#a6a6a6;"></div>
<div style="left:14px;top:103px;width:2px;height:2px;background:#8a8a8a;"></div>
<div style="left:14px;top:115px;width:2px;height:2px;background:#8a8a8a;"></div>
<div style="left:3px;top:98px;width:2px;height:26px;background:#8a8a8a;"></div>
<div style="left:1px;top:124.0px;width:9px;height:9px;background:#fff;border:1px solid #9a9a9a;border-radius:2px;"></div>
<div style="left:3.5px;top:129.2px;width:6px;height:1.3px;background:#444;"></div>
<div style="left:14px;top:195px;width:2px;height:2px;background:#8a8a8a;"></div>
<div style="left:14px;top:208px;width:2px;height:2px;background:#8a8a8a;"></div>
<div style="left:14px;top:221px;width:2px;height:2px;background:#8a8a8a;"></div>
<div style="left:14px;top:234px;width:2px;height:2px;background:#8a8a8a;"></div>
<div style="left:14px;top:247px;width:2px;height:2px;background:#8a8a8a;"></div>
<div style="left:14px;top:260px;width:2px;height:2px;background:#8a8a8a;"></div>
<div style="left:14px;top:273px;width:2px;height:2px;background:#8a8a8a;"></div>
<div style="left:14px;top:286px;width:2px;height:2px;background:#8a8a8a;"></div>
<div style="left:14px;top:299px;width:2px;height:2px;background:#8a8a8a;"></div>
<div style="left:14px;top:312px;width:2px;height:2px;background:#8a8a8a;"></div>
<div style="left:14px;top:325px;width:2px;height:2px;background:#8a8a8a;"></div>
<div style="left:14px;top:338px;width:2px;height:2px;background:#8a8a8a;"></div>
<div style="left:14px;top:351px;width:2px;height:2px;background:#8a8a8a;"></div>
<div style="left:14px;top:364px;width:2px;height:2px;background:#8a8a8a;"></div>
<div style="left:14px;top:377px;width:2px;height:2px;background:#8a8a8a;"></div>
<div style="left:14px;top:390px;width:2px;height:2px;background:#8a8a8a;"></div>
<div style="left:14px;top:403px;width:2px;height:2px;background:#8a8a8a;"></div>
<div style="left:14px;top:416px;width:2px;height:2px;background:#8a8a8a;"></div>
<div style="left:14px;top:429px;width:2px;height:2px;background:#8a8a8a;"></div>
<div style="left:14px;top:442px;width:2px;height:2px;background:#8a8a8a;"></div>
<div style="left:3px;top:191px;width:6px;height:2px;background:#8a8a8a;"></div>
<div style="left:3px;top:191px;width:2px;height:261px;background:#8a8a8a;"></div>
<div style="left:1px;top:451.0px;width:9px;height:9px;background:#fff;border:1px solid #9a9a9a;border-radius:2px;"></div>
<div style="left:3.5px;top:456.2px;width:6px;height:1.3px;background:#444;"></div>
<div style="left:14px;top:562px;width:2px;height:2px;background:#8a8a8a;"></div>
<div style="left:14px;top:575px;width:2px;height:2px;background:#8a8a8a;"></div>
<div style="left:14px;top:588px;width:2px;height:2px;background:#8a8a8a;"></div>
<div style="left:14px;top:601px;width:2px;height:2px;background:#8a8a8a;"></div>
<div style="left:14px;top:614px;width:2px;height:2px;background:#8a8a8a;"></div>
<div style="left:14px;top:627px;width:2px;height:2px;background:#8a8a8a;"></div>
<div style="left:3px;top:558px;width:6px;height:2px;background:#8a8a8a;"></div>
<div style="left:3px;top:558px;width:2px;height:76px;background:#8a8a8a;"></div>
<div style="left:0px;top:634px;width:1435px;height:26px;background:#efefef;"></div>
<div style="left:0px;top:634px;width:1435px;height:1px;background:#cfcfcf;"></div>
<svg style="position:absolute;left:12px;top:641px" width="36" height="14" viewBox="0 0 36 14"><path d="M9 1.5 L9 12.5 L2 7Z" fill="#8a8a8a"/><path d="M25 1.5 L25 12.5 L32 7Z" fill="#8a8a8a"/></svg>
<div class="t " style="left:59.55px;width:79px;text-align:center;top:638.50px;font-size:12.4px;line-height:12.4px;color:#666;">Index</div>
<div style="left:138px;top:635px;width:1px;height:20px;background:#c6c6c6;"></div>
<div style="left:138px;top:634px;width:100px;height:4px;background:#e8ea6a;"></div>
<div class="t " style="left:138.6px;width:100px;text-align:center;top:638.50px;font-size:12.4px;line-height:12.4px;color:#666;">Instructions</div>
<div style="left:238px;top:635px;width:1px;height:20px;background:#c6c6c6;"></div>
<div style="left:238px;top:634px;width:79px;height:4px;background:#eef0b6;"></div>
<div class="t " style="left:238.5px;width:79px;text-align:center;top:638.50px;font-size:12.4px;line-height:12.4px;color:#666;">Control</div>
<div style="left:317px;top:635px;width:1px;height:20px;background:#c6c6c6;"></div>
<div style="left:317px;top:634px;width:128px;height:4px;background:#eef0b6;"></div>
<div class="t " style="left:317.4px;width:128px;text-align:center;top:638.50px;font-size:12.4px;line-height:12.4px;color:#666;">Revenue Builder</div>
<div style="left:445px;top:635px;width:1px;height:20px;background:#c6c6c6;"></div>
<div style="left:445px;top:634px;width:79px;height:4px;background:#eef0b6;"></div>
<div class="t " style="left:445.4px;width:79px;text-align:center;top:638.50px;font-size:12.4px;line-height:12.4px;color:#666;">Costs</div>
<div style="left:524px;top:635px;width:1px;height:20px;background:#c6c6c6;"></div>
<div style="left:524px;top:634px;width:149px;height:4px;background:#62c2ec;"></div>
<div class="t " style="left:524.3px;width:149px;text-align:center;top:638.50px;font-size:12.4px;line-height:12.4px;color:#666;">Executive Summary</div>
<div style="left:673px;top:635px;width:1px;height:20px;background:#c6c6c6;"></div>
<div style="left:673px;top:634px;width:79px;height:4px;background:#6b9fd2;"></div>
<div class="t " style="left:673.25px;width:79px;text-align:center;top:638.50px;font-size:12.4px;line-height:12.4px;color:#666;">Visuals</div>
<div style="left:752px;top:635px;width:1px;height:20px;background:#c6c6c6;"></div>
<div style="left:752px;top:634px;width:79px;height:4px;background:#62c2ec;"></div>
<div class="t " style="left:752.2px;width:79px;text-align:center;top:638.50px;font-size:12.4px;line-height:12.4px;color:#666;">Returns</div>
<div style="left:831px;top:635px;width:1px;height:20px;background:#c6c6c6;"></div>
<div style="left:831px;top:634px;width:115px;height:4px;background:#62c2ec;"></div>
<div class="t " style="left:831.25px;width:115px;text-align:center;top:638.50px;font-size:12.4px;line-height:12.4px;color:#666;">DCF Valuation</div>
<div style="left:946px;top:635px;width:1px;height:20px;background:#c6c6c6;"></div>
<div style="left:946px;top:634px;width:106px;height:4px;background:#62c2ec;"></div>
<div class="t " style="left:946.55px;width:106px;text-align:center;top:638.50px;font-size:12.4px;line-height:12.4px;color:#666;">Monthly P&amp;L</div>
<div style="left:1052px;top:635px;width:1px;height:20px;background:#c6c6c6;"></div>
<div style="left:1052px;top:634px;width:101px;height:19px;background:#fff;box-shadow:0 1px 1.5px rgba(0,0,0,0.25);"></div>
<div style="left:1052px;top:653px;width:101px;height:3px;background:#5cc3ef;box-shadow:0 1px 1px rgba(0,0,0,0.2);"></div>
<div class="t " style="left:1052.5px;width:101px;text-align:center;top:639.10px;font-size:11.7px;line-height:11.7px;color:#1ba3e6;font-weight:bold;">Annual P&amp;L</div>
<div style="left:1153px;top:635px;width:1px;height:20px;background:#c6c6c6;"></div>
<div style="left:1153px;top:634px;width:79px;height:4px;background:#db6a6a;"></div>
<div class="t " style="left:1153.25px;width:79px;text-align:center;top:638.50px;font-size:12.4px;line-height:12.4px;color:#666;">Debt</div>
<div style="left:1232px;top:635px;width:1px;height:20px;background:#c6c6c6;"></div>
<div class="t " style="left:1232.55px;width:88px;text-align:center;top:638.50px;font-size:12.4px;line-height:12.4px;color:#666;">validation</div>
<div style="left:1320px;top:635px;width:1px;height:20px;background:#c6c6c6;"></div>
<div style="left:1358px;top:635px;width:1px;height:20px;background:#c6c6c6;"></div>
<div style="left:59px;top:635px;width:1px;height:20px;background:#c6c6c6;"></div>
<div style="left:1335px;top:646.5px;width:10px;height:1.8px;background:#4a4a4a;"></div>
<div style="left:1339.1px;top:642px;width:1.8px;height:10px;background:#4a4a4a;"></div>
</div></body></html>
